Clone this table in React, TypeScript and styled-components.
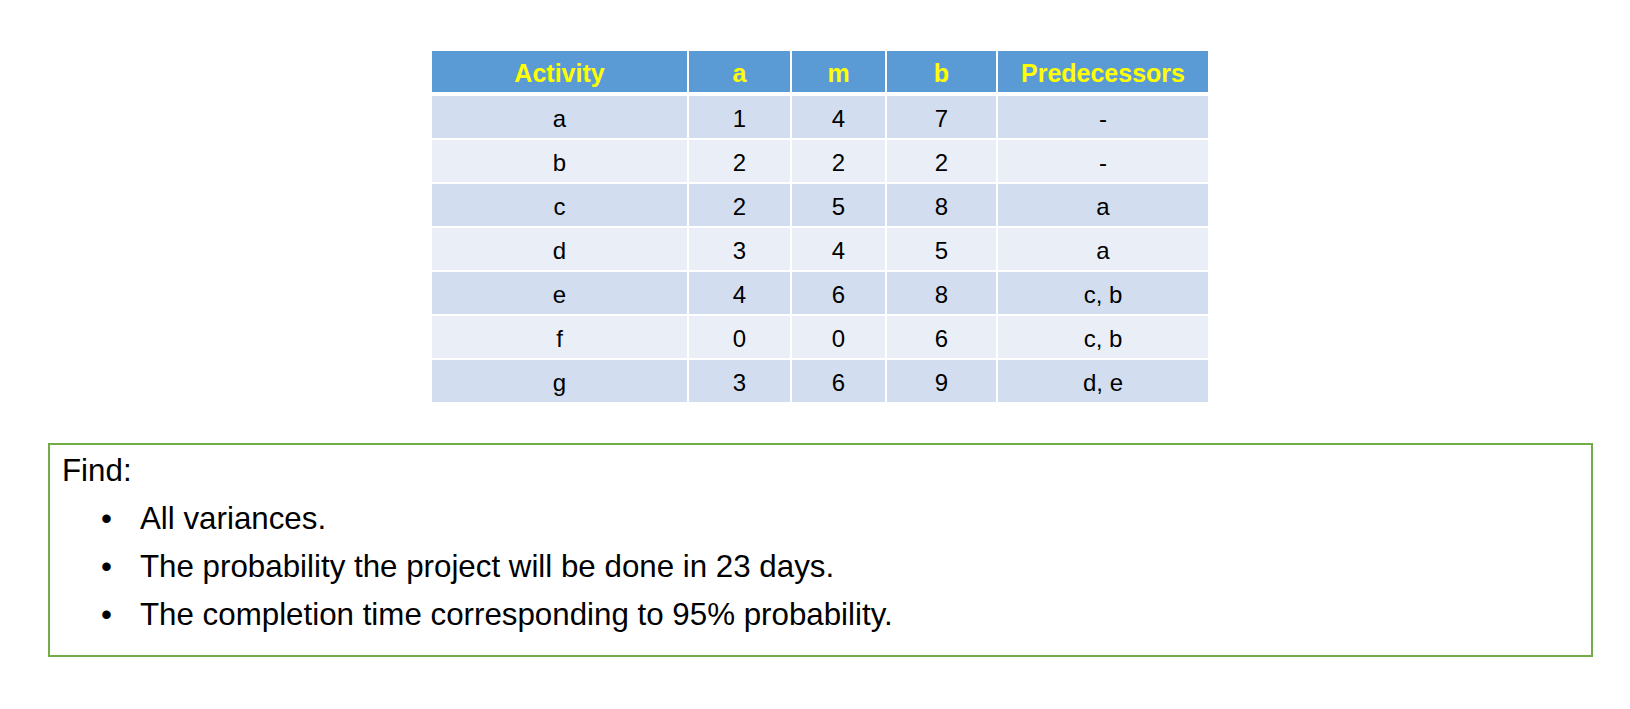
import React from "react";
import styled, { createGlobalStyle } from "styled-components";

const GlobalStyle = createGlobalStyle`
    body {
        margin: 0;
        background: #ffffff;
        font-family: "Liberation Sans", Arial, sans-serif;
    }
`;

const Page = styled.div`
    width: 1630px;
    height: 709px;
    padding-top: 51px;
    box-sizing: border-box;
    display: flex;
    flex-direction: column;
`;

const Table = styled.div`
    margin-left: 432px;
    width: 776px;
    display: flex;
    flex-direction: column;
    gap: 2px;
`;

const Row = styled.div<{ $band: "head" | "odd" | "even" }>`
    display: grid;
    grid-template-columns: 255px 101px 93px 109px 210px;
    column-gap: 2px;
    height: ${(p) => (p.$band === "head" ? "41px" : "42px")};
    margin-bottom: ${(p) => (p.$band === "head" ? "2px" : "0")};
`;

const Cell = styled.div<{ $band: "head" | "odd" | "even" }>`
    display: flex;
    align-items: center;
    justify-content: center;
    padding-top: 3px;
    box-sizing: border-box;
    background: ${(p) =>
        p.$band === "head" ? "#5b9bd5" : p.$band === "odd" ? "#d2deef" : "#eaeff7"};
    color: ${(p) => (p.$band === "head" ? "#ffff00" : "#000000")};
    font-size: ${(p) => (p.$band === "head" ? "25px" : "24px")};
    font-weight: ${(p) => (p.$band === "head" ? 700 : 400)};
`;

const TaskBox = styled.div`
    margin: 41px 0 0 48px;
    width: 1545px;
    height: 214px;
    box-sizing: border-box;
    border: 2px solid #70ad47;
    padding: 2px 0 0 12px;
    font-size: 31.3px;
    line-height: 48px;
    color: #000000;
`;

const Lead = styled.div``;

const Bullets = styled.ul`
    list-style: none;
    margin: 0;
    padding: 0 0 0 39px;
`;

const Bullet = styled.li`
    display: grid;
    grid-template-columns: 39px 1fr;
    &::before {
        content: "•";
    }
`;

const header = ["Activity", "a", "m", "b", "Predecessors"];

const rows = [
    ["a", "1", "4", "7", "-"],
    ["b", "2", "2", "2", "-"],
    ["c", "2", "5", "8", "a"],
    ["d", "3", "4", "5", "a"],
    ["e", "4", "6", "8", "c, b"],
    ["f", "0", "0", "6", "c, b"],
    ["g", "3", "6", "9", "d, e"],
];

const tasks = [
    "All variances.",
    "The probability the project will be done in 23 days.",
    "The completion time corresponding to 95% probability.",
];

const App = () => {
    return (
        <>
            <GlobalStyle />
            <Page>
                <Table>
                    <Row $band="head">
                        {header.map((h) => (
                            <Cell $band="head" key={h}>{h}</Cell>
                        ))}
                    </Row>
                    {rows.map((r, idx) => {
                        const band = idx % 2 === 0 ? "odd" : "even";
                        return (
                            <Row $band={band} key={`row-${idx}`}>
                                {r.map((v, i) => (
                                    <Cell $band={band} key={`cell-${idx}-${i}`}>{v}</Cell>
                                ))}
                            </Row>
                        );
                    })}
                </Table>
                <TaskBox>
                    <Lead>Find:</Lead>
                    <Bullets>
                        {tasks.map((t) => (
                            <Bullet key={t}>{t}</Bullet>
                        ))}
                    </Bullets>
                </TaskBox>
            </Page>
        </>
    );
};

export default App;
